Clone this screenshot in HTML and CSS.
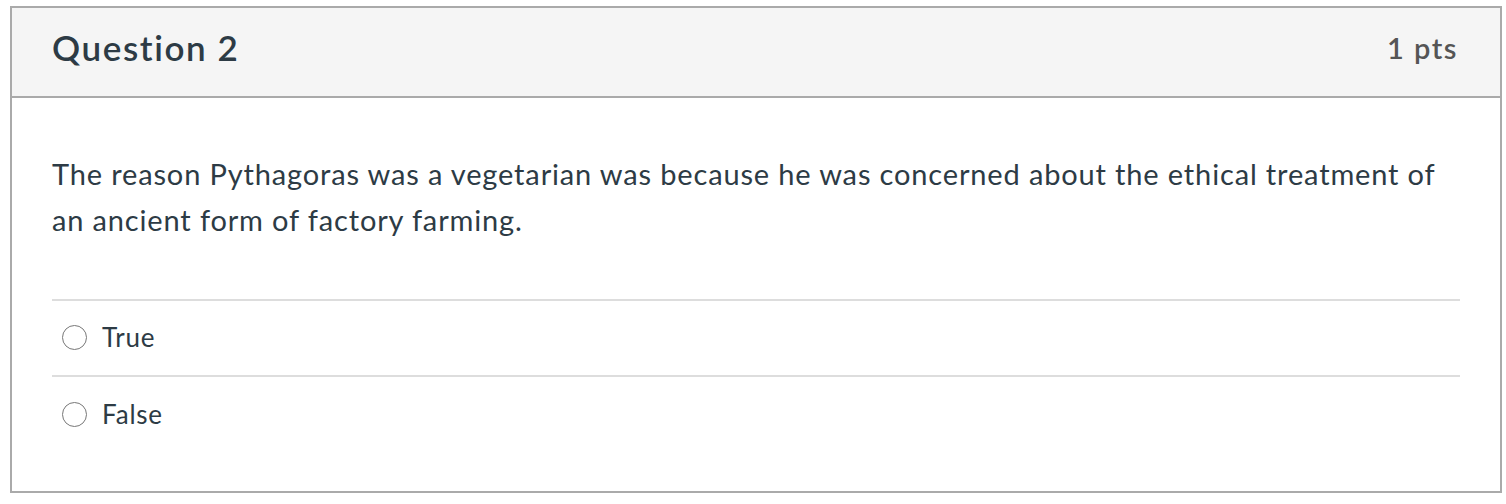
FILE: index.html
```html
<!DOCTYPE html>
<html>
<head>
<meta charset="utf-8">
<link rel="stylesheet" href="styles.css">
</head>
<body>
<div class="question">
  <div class="question-header">
    <h2 class="question-title">Question 2</h2>
    <div class="question-points">1 pts</div>
  </div>
  <div class="question-body">
    <p class="question-text">The reason Pythagoras was a vegetarian was because he was concerned about the ethical treatment of an ancient form of factory farming.</p>
    <div class="answers">
      <label class="answer"><span class="radio"></span><span class="answer-label">True</span></label>
      <label class="answer"><span class="radio"></span><span class="answer-label">False</span></label>
    </div>
  </div>
</div>
</body>
</html>
```
FILE: styles.css
```css
html, body {
  margin: 0;
  padding: 0;
  background: #ffffff;
}
body {
  font-family: "Lato", "Noto Sans", sans-serif;
  color: #2d3b45;
}
.question {
  margin: 6px 4px 0 10px;
  border: 2px solid #aaaaaa;
  height: 487px;
  box-sizing: border-box;
}
.question-header {
  height: 90px;
  box-sizing: border-box;
  background: #f5f5f5;
  border-bottom: 2px solid #aaaaaa;
  display: flex;
  align-items: center;
  justify-content: space-between;
  padding: 0 42px 10px 40px;
}
.question-title {
  margin: 0;
  font-size: 35px;
  font-weight: 600;
  letter-spacing: 1.6px;
  color: #2d3b45;
}
.question-points {
  font-size: 29px;
  font-weight: 600;
  letter-spacing: 1.5px;
  color: #555555;
}
.question-body {
  padding: 53px 40px 0 40px;
}
.question-text {
  margin: 0;
  font-size: 29px;
  line-height: 46px;
  letter-spacing: 0.85px;
}
.answers {
  margin-top: 56px;
  border-top: 2px solid #dddddd;
}
.answer {
  display: flex;
  align-items: center;
  height: 76px;
  box-sizing: border-box;
  padding-left: 10px;
  padding-bottom: 2px;
  border-bottom: 2px solid #dddddd;
  font-size: 26px;
  letter-spacing: 0.8px;
}
.answer:last-child {
  border-bottom: none;
}
.radio {
  width: 25px;
  height: 25px;
  box-sizing: border-box;
  border: 1.5px solid #777777;
  border-radius: 50%;
  margin-right: 15px;
  margin-top: 1px;
  flex: none;
}
```
